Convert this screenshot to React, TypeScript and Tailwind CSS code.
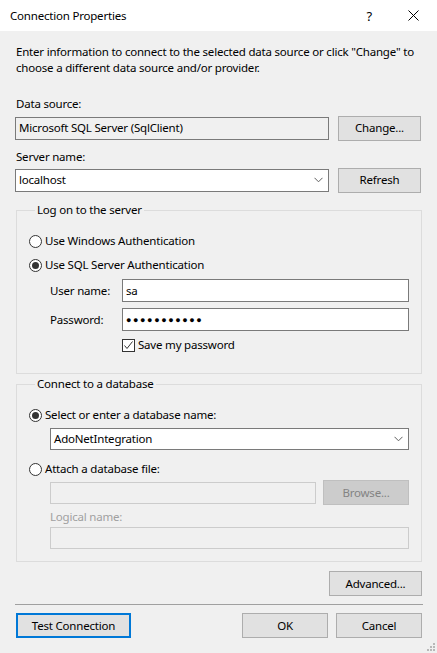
import React from "react";

const font = { fontFamily: '"Segoe UI", "Noto Sans", "Open Sans", sans-serif' };

function Chevron() {
  return (
    <svg width="9" height="6" viewBox="0 0 9 6" className="shrink-0">
      <path d="M0.5 0.8 L4.5 4.8 L8.5 0.8" fill="none" stroke="#606060" strokeWidth="1" />
    </svg>
  );
}

function Radio({ checked }: { checked?: boolean }) {
  return (
    <span className="flex h-[13px] w-[13px] shrink-0 items-center justify-center rounded-full border border-[#333333] bg-white">
      {checked && <span className="h-[7px] w-[7px] rounded-full bg-[#333333]" />}
    </span>
  );
}

function Button({ children, className = "", disabled }: { children: React.ReactNode; className?: string; disabled?: boolean }) {
  return (
    <div
      className={
        "flex h-[25px] shrink-0 items-center justify-center border " +
        (disabled ? "border-[#bfbfbf] bg-[#cccccc] text-[#838383] " : "border-[#adadad] bg-[#e1e1e1] text-black ") +
        className
      }
    >
      {children}
    </div>
  );
}

export default function App() {
  return (
    <div
      className="flex h-[653px] w-[437px] flex-col whitespace-nowrap bg-[#f0f0f0] text-[11.5px] leading-[16px] tracking-[-0.2px] text-black"
      style={font}
    >
      {/* title bar */}
      <div className="flex h-[31px] shrink-0 items-center bg-white pl-[10px]">
        <span className="flex-1">Connection Properties</span>
        <span className="mr-[36px] text-[13px]">?</span>
        <svg width="11" height="11" viewBox="0 0 11 11" className="mr-[18px]">
          <path d="M0.5 0.5 L10.5 10.5 M10.5 0.5 L0.5 10.5" stroke="#000" strokeWidth="1" />
        </svg>
      </div>

      <div className="flex flex-1 flex-col pl-[15px] pr-[15px]">
        <p className="mt-[13px] whitespace-normal pl-[1px]">
          Enter information to connect to the selected data source or click "Change" to choose a different data source and/or provider.
        </p>

        <div className="mt-[20px] pl-[1px]">Data source:</div>
        <div className="mt-[3px] flex h-[26px] items-center">
          <div className="flex h-[23px] w-[314px] items-center border border-[#7a7a7a] bg-[#f0f0f0] pl-[3px]">
            Microsoft SQL Server (SqlClient)
          </div>
          <Button className="ml-[9px] w-[83px]">Change...</Button>
        </div>

        <div className="mt-[8px] pl-[1px]">Server name:</div>
        <div className="mt-[3px] flex h-[24px] items-center">
          <div className="flex h-[23px] w-[314px] items-center border border-[#7a7a7a] bg-white pl-[3px] pr-[5px]">
            <span className="flex-1">localhost</span>
            <Chevron />
          </div>
          <Button className="ml-[9px] h-[24px] w-[83px]">Refresh</Button>
        </div>

        {/* group 1 */}
        <fieldset className="ml-[1px] mt-[10px] border border-[#dcdcdc] pb-[20px] pl-[12px] pr-[12px]">
          <legend className="ml-[6px] px-[2px]">Log on to the server</legend>
          <div className="mt-[15px] flex h-[16px] items-center gap-[3px]">
            <Radio />
            <span>Use Windows Authentication</span>
          </div>
          <div className="mt-[8px] flex h-[16px] items-center gap-[3px]">
            <Radio checked />
            <span>Use SQL Server Authentication</span>
          </div>
          <div className="mt-[6px] flex h-[23px] items-center">
            <span className="w-[93px] shrink-0 pl-[21px]">User name:</span>
            <div className="flex h-[23px] flex-1 items-center border border-[#7a7a7a] bg-white pl-[3px]">sa</div>
          </div>
          <div className="mt-[6px] flex h-[23px] items-center">
            <span className="w-[93px] shrink-0 pl-[21px]">Password:</span>
            <div className="flex h-[23px] flex-1 items-center border border-[#7a7a7a] bg-white pl-[3px] text-[9px] tracking-[1.6px]">
              ●●●●●●●●●●●
            </div>
          </div>
          <div className="mt-[6px] flex h-[16px] items-center gap-[3px] pl-[93px]">
            <span className="flex h-[13px] w-[13px] shrink-0 items-center justify-center border border-[#333333] bg-white">
              <svg width="11" height="11" viewBox="0 0 11 11">
                <path d="M1.5 5.5 L4 8.5 L9.5 1.5" fill="none" stroke="#333" strokeWidth="1" />
              </svg>
            </span>
            <span>Save my password</span>
          </div>
        </fieldset>

        {/* group 2 */}
        <fieldset className="ml-[1px] mt-[2px] border border-[#dcdcdc] pb-[12px] pl-[12px] pr-[12px]">
          <legend className="ml-[6px] px-[2px]">Connect to a database</legend>
          <div className="mt-[15px] flex h-[16px] items-center gap-[3px]">
            <Radio checked />
            <span>Select or enter a database name:</span>
          </div>
          <div className="ml-[21px] mt-[5px] flex h-[22px] items-center border border-[#7a7a7a] bg-white pl-[3px] pr-[5px]">
            <span className="flex-1">AdoNetIntegration</span>
            <Chevron />
          </div>
          <div className="mt-[11px] flex h-[16px] items-center gap-[3px]">
            <Radio />
            <span>Attach a database file:</span>
          </div>
          <div className="ml-[21px] mt-[3px] flex h-[25px] items-center">
            <div className="h-[22px] w-[266px] border border-[#cccccc] bg-[#f0f0f0]" />
            <Button disabled className="ml-[7px] w-[86px]">Browse...</Button>
          </div>
          <div className="ml-[21px] mt-[4px] text-[#a0a0a0]">Logical name:</div>
          <div className="ml-[21px] mt-[2px] h-[22px] border border-[#cccccc] bg-[#f0f0f0]" />
        </fieldset>

        <div className="mt-[9px] flex justify-end">
          <Button className="h-[24px] w-[93px]">Advanced...</Button>
        </div>

        <div className="mt-[8px] h-[1px] w-[408px] bg-[#a0a0a0]" />

        <div className="mt-[8px] flex items-center">
          <div className="ml-[1px] flex h-[25px] w-[115px] items-center justify-center border-2 border-[#0078d7] bg-[#e1e1e1]">
            Test Connection
          </div>
          <div className="flex-1" />
          <Button className="w-[86px]">OK</Button>
          <Button className="ml-[8px] w-[86px]">Cancel</Button>
        </div>
        <div className="flex flex-1 items-end justify-end pb-[2px]">
          <svg width="10" height="10" viewBox="0 0 10 10" className="-mr-[13px]">
            {[
              [8, 2],
              [5, 5],
              [8, 5],
              [2, 8],
              [5, 8],
              [8, 8],
            ].map(([x, y], i) => (
              <rect key={i} x={x} y={y} width="2" height="2" fill="#b8b8b8" />
            ))}
          </svg>
        </div>
      </div>
    </div>
  );
}
